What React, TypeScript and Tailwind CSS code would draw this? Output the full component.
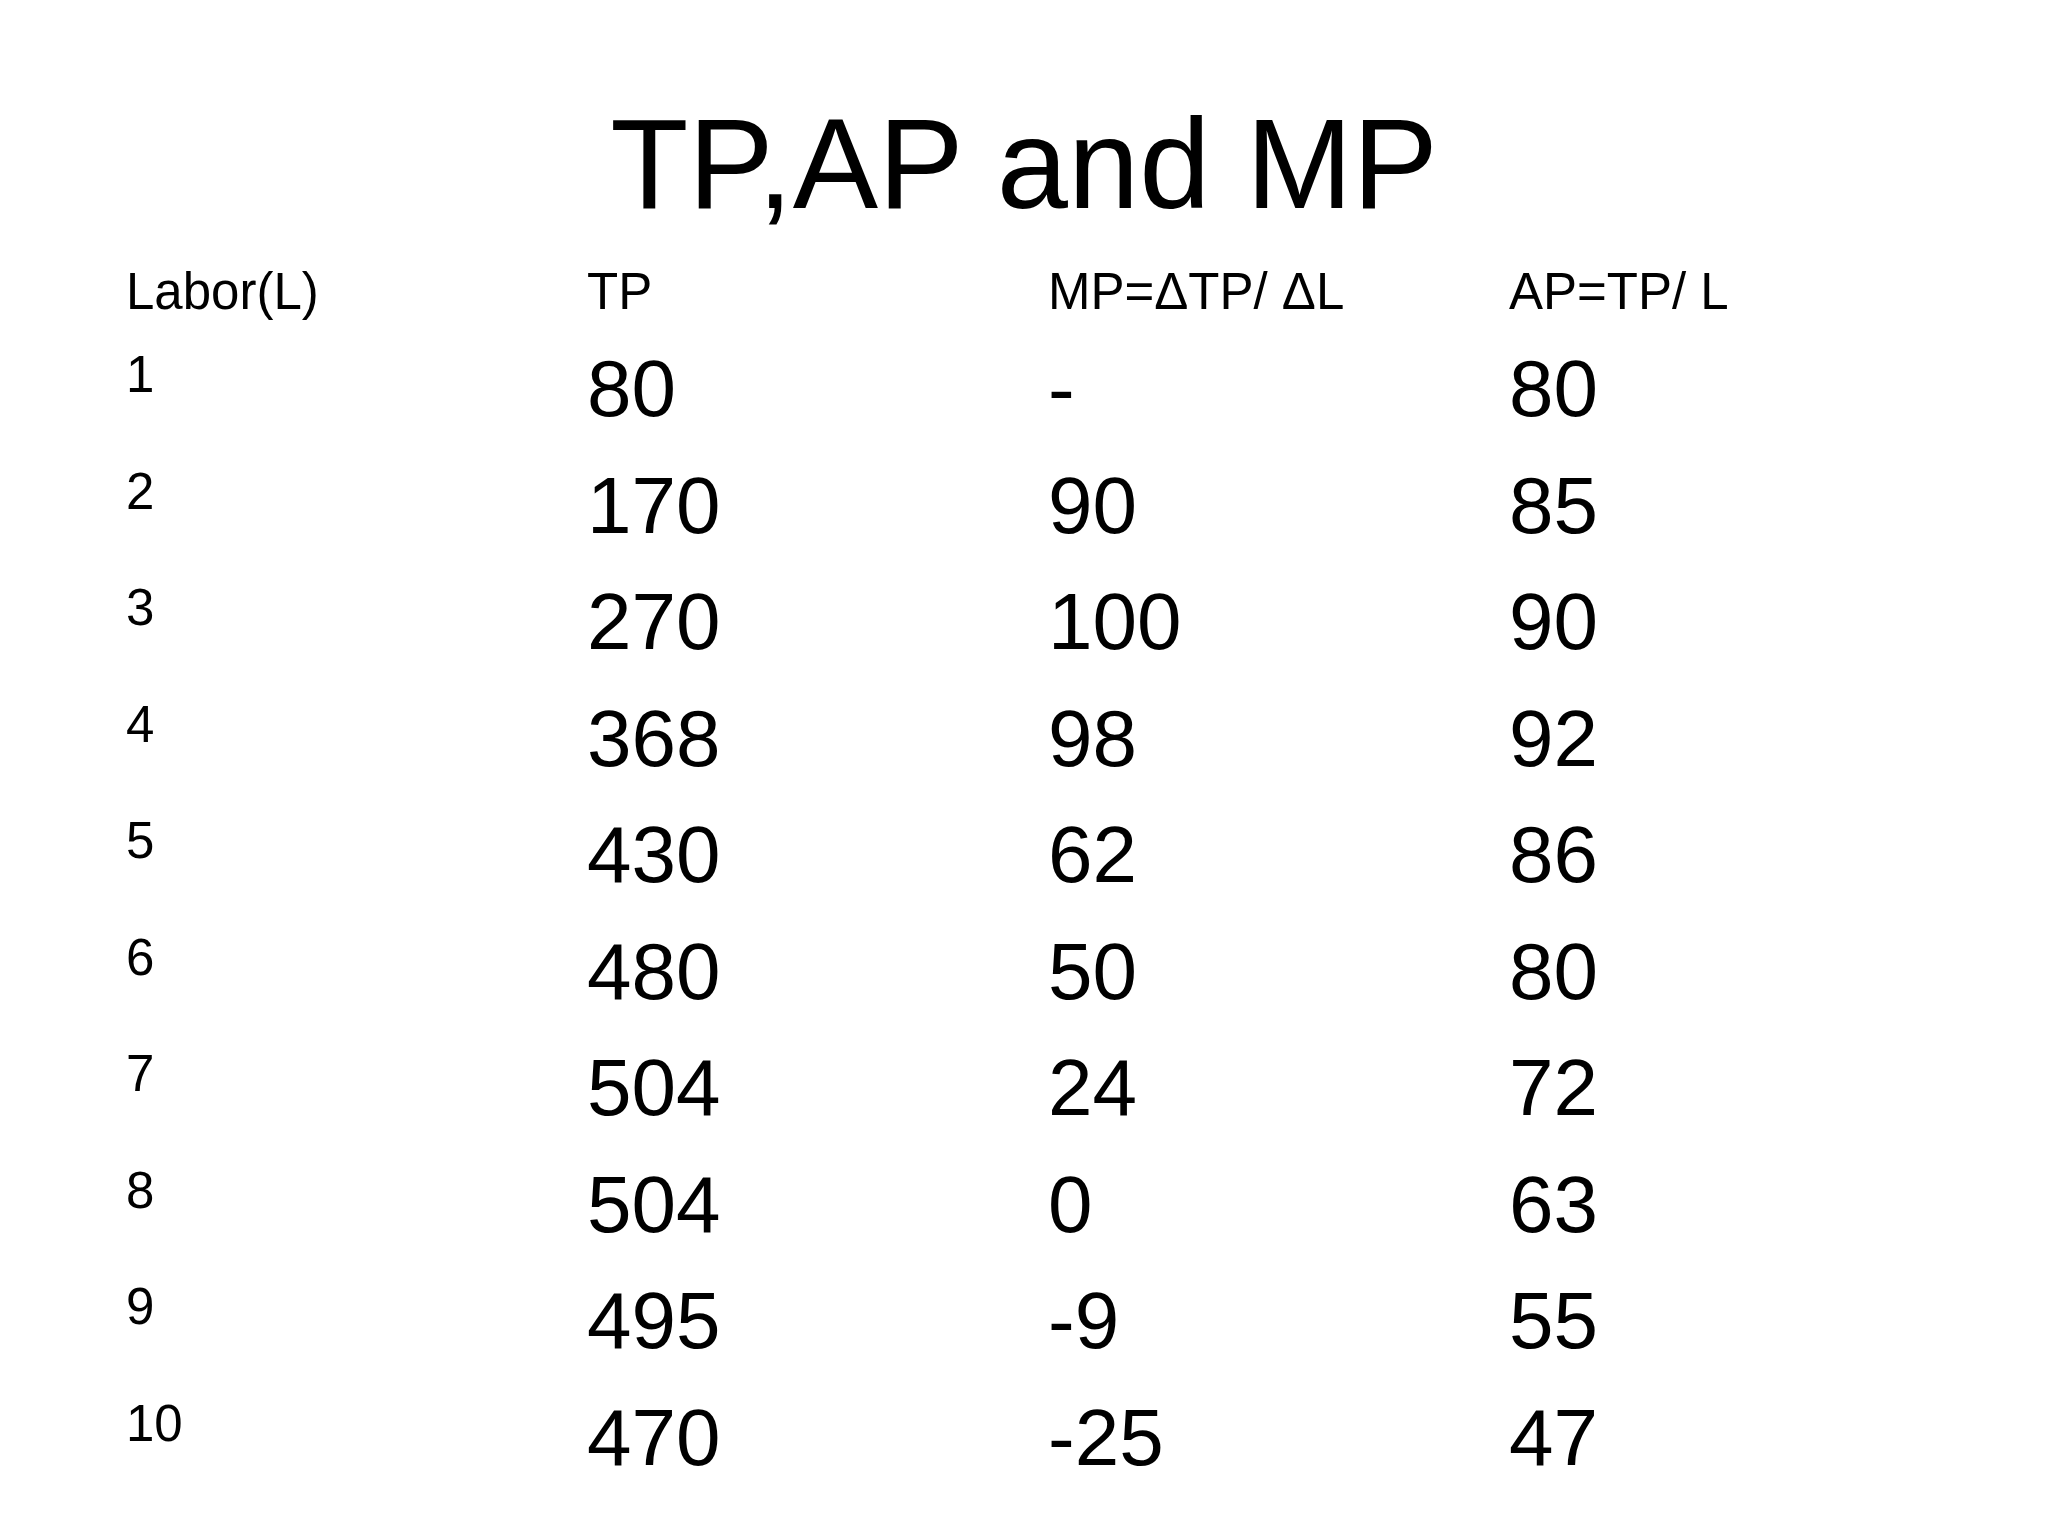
const rows = [
  { l: "1", tp: "80", mp: "-", ap: "80" },
  { l: "2", tp: "170", mp: "90", ap: "85" },
  { l: "3", tp: "270", mp: "100", ap: "90" },
  { l: "4", tp: "368", mp: "98", ap: "92" },
  { l: "5", tp: "430", mp: "62", ap: "86" },
  { l: "6", tp: "480", mp: "50", ap: "80" },
  { l: "7", tp: "504", mp: "24", ap: "72" },
  { l: "8", tp: "504", mp: "0", ap: "63" },
  { l: "9", tp: "495", mp: "-9", ap: "55" },
  { l: "10", tp: "470", mp: "-25", ap: "47" },
];

const App = () => {
  return (
    <div className="min-h-screen w-full bg-white text-black font-['Liberation_Sans',Arial,sans-serif]">
      <div className="pt-[100px] text-center text-[128px] leading-none">
        TP,AP and MP
      </div>

      <div className="mt-[38px] pl-[126px]">
        {/* header row */}
        <div className="grid grid-cols-[461px_461px_461px_461px] h-[83px] text-[51px] leading-none">
          <div>Labor(L)</div>
          <div>TP</div>
          <div>MP=ΔTP/ ΔL</div>
          <div>AP=TP/ L</div>
        </div>

        {rows.map((row, index) => {
          return (
            <div
              key={index}
              className="grid grid-cols-[461px_461px_461px_461px] h-[116.5px] items-start leading-none"
            >
              <div className="text-[51px]">{row.l}</div>
              <div className="text-[80px]">{row.tp}</div>
              <div className="text-[80px]">{row.mp}</div>
              <div className="text-[80px]">{row.ap}</div>
            </div>
          );
        })}
      </div>
    </div>
  );
};

export default App;
